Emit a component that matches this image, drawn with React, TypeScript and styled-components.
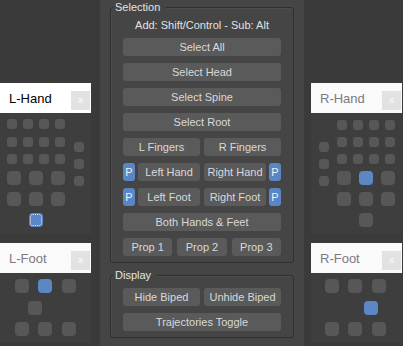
import React from "react";
import styled, { createGlobalStyle } from "styled-components";

const Global = createGlobalStyle`
  html, body { margin: 0; padding: 0; background: #3a3a3a; }
  body { font-family: "Liberation Sans", Arial, sans-serif; }
  #root { width: 403px; height: 346px; }
  * { box-sizing: border-box; }
`;

const Window = styled.div`
  display: flex;
  width: 403px;
  height: 346px;
  background: #3a3a3a;
  overflow: hidden;
`;

const SideColumn = styled.div<{ $right?: boolean }>`
  width: 91px;
  flex: none;
  display: flex;
  flex-direction: column;
  gap: 9px;
  padding-top: 83px;
  margin-left: ${(p) => (p.$right ? "7px" : "0")};
`;

const Panel = styled.div`
  display: flex;
  flex-direction: column;
`;

const PanelHeader = styled.div<{ $active?: boolean }>`
  height: 30px;
  display: flex;
  align-items: center;
  padding-left: 9px;
  background: ${(p) => (p.$active ? "#ffffff" : "#fafafa")};
`;

const PanelTitle = styled.span<{ $active?: boolean }>`
  font-size: 13px;
  color: ${(p) => (p.$active ? "#000000" : "#7c7884")};
`;

const CloseButton = styled.div`
  margin-left: auto;
  align-self: flex-end;
  margin-right: 1px;
  margin-bottom: 3px;
  width: 19px;
  height: 19px;
  background: #e2e2e2;
  color: #f7f7f7;
  font-size: 9px;
  font-weight: bold;
  display: flex;
  align-items: center;
  justify-content: center;
  line-height: 1;
`;

const PanelBody = styled.div<{ $h: number }>`
  position: relative;
  height: ${(p) => p.$h}px;
  background: #3e3e3e;
`;

const Node = styled.div<{ $x: number; $y: number; $s: number; $on?: boolean; $focus?: boolean }>`
  position: absolute;
  left: ${(p) => p.$x}px;
  top: ${(p) => p.$y}px;
  width: ${(p) => p.$s}px;
  height: ${(p) => p.$s}px;
  border-radius: ${(p) => (p.$s > 12 ? 4 : 3)}px;
  background: ${(p) => (p.$on ? "#5b87c5" : "#575757")};
  outline: ${(p) => (p.$focus ? "1px dotted #dde6f2" : "none")};
  outline-offset: -2px;
`;

const Center = styled.div`
  width: 204px;
  flex: none;
  margin-left: 9px;
  background: #454545;
  padding: 7px 10px 0;
  display: flex;
  flex-direction: column;
  gap: 12px;
`;

const Group = styled.div<{ $pt: number }>`
  position: relative;
  width: 184px;
  border: 1px solid #2f2f2f;
  border-radius: 3px;
  box-shadow: inset 1px 1px 0 #4d4d4d;
  padding: ${(p) => p.$pt}px 12px 6px;
  display: flex;
  flex-direction: column;
  gap: 7px;
`;

const Legend = styled.span`
  position: absolute;
  top: -8px;
  left: 2px;
  padding: 0 6px 0 2px;
  background: #454545;
  color: #e4e4e4;
  font-size: 11px;
  line-height: 14px;
`;

const Hint = styled.div`
  color: #e2e2e2;
  font-size: 11px;
  line-height: 13px;
  text-align: center;
  margin-bottom: -1px;
`;

const Row = styled.div<{ $gap: number; $grow?: boolean }>`
  display: flex;
  gap: ${(p) => p.$gap}px;
  flex: ${(p) => (p.$grow ? "1 1 0" : "none")};
`;

const Button = styled.div<{ $pin?: boolean; $grow?: boolean }>`
  height: 18px;
  flex: ${(p) => (p.$grow ? "1 1 0" : "none")};
  width: ${(p) => (p.$pin ? "12px" : "auto")};
  border-radius: 3px;
  background: ${(p) => (p.$pin ? "#5a86c4" : "#5a5a5a")};
  color: ${(p) => (p.$pin ? "#eef2f8" : "#d9d9d9")};
  font-size: 11px;
  display: flex;
  align-items: center;
  justify-content: center;
  white-space: nowrap;
`;

type N = [number, number, number, boolean?, boolean?];

const lHand: N[] = [
  [7, 6, 10], [23, 6, 10], [39, 6, 10], [55, 6, 10],
  [7, 24, 10], [23, 24, 10], [39, 24, 10], [55, 24, 10],
  [7, 41, 10], [23, 41, 10], [39, 41, 10], [55, 41, 10],
  [74, 29, 10], [74, 46, 10], [74, 63, 10],
  [7, 58, 14], [29, 58, 14], [51, 58, 14],
  [7, 79, 14], [29, 79, 14], [51, 79, 14],
  [29, 100, 14, true, true],
];

const rHand: N[] = [
  [26, 7, 10], [42, 7, 10], [58, 7, 10], [74, 7, 10],
  [26, 24, 10], [42, 24, 10], [58, 24, 10], [74, 24, 10],
  [26, 41, 10], [42, 41, 10], [58, 41, 10], [74, 41, 10],
  [8, 29, 10], [8, 46, 10], [8, 63, 10],
  [26, 58, 14], [48, 58, 14, true], [70, 58, 14],
  [26, 79, 14], [48, 79, 14], [70, 79, 14],
  [48, 100, 14],
];

const lFoot: N[] = [
  [15, 6, 14], [38, 6, 14, true], [62, 6, 14],
  [28, 28, 14],
  [15, 49, 14], [38, 49, 14], [62, 49, 14],
];

const rFoot: N[] = [
  [14, 6, 14], [37, 6, 14], [61, 6, 14],
  [53, 28, 14, true],
  [14, 49, 14], [37, 49, 14], [61, 49, 14],
];

const Picker: React.FC<{ title: string; active?: boolean; h: number; nodes: N[] }> = ({ title, active, h, nodes }) => (
  <Panel>
    <PanelHeader $active={active}>
      <PanelTitle $active={active}>{title}</PanelTitle>
      <CloseButton>x</CloseButton>
    </PanelHeader>
    <PanelBody $h={h}>
      {nodes.map(([x, y, s, on, focus], i) => (
        <Node key={i} $x={x} $y={y} $s={s} $on={on} $focus={focus} />
      ))}
    </PanelBody>
  </Panel>
);

export default function App() {
  return (
    <>
      <Global />
      <Window>
        <SideColumn>
          <Picker title="L-Hand" active h={121} nodes={lHand} />
          <Picker title="L-Foot" h={70} nodes={lFoot} />
        </SideColumn>
        <Center>
          <Group $pt={11}>
            <Legend>Selection</Legend>
            <Hint>Add: Shift/Control - Sub: Alt</Hint>
            <Button>Select All</Button>
            <Button>Select Head</Button>
            <Button>Select Spine</Button>
            <Button>Select Root</Button>
            <Row $gap={4}>
              <Button $grow>L Fingers</Button>
              <Button $grow>R Fingers</Button>
            </Row>
            <Row $gap={3}>
              <Button $pin>P</Button>
              <Row $gap={4} $grow>
                <Button $grow>Left Hand</Button>
                <Button $grow>Right Hand</Button>
              </Row>
              <Button $pin>P</Button>
            </Row>
            <Row $gap={3}>
              <Button $pin>P</Button>
              <Row $gap={4} $grow>
                <Button $grow>Left Foot</Button>
                <Button $grow>Right Foot</Button>
              </Row>
              <Button $pin>P</Button>
            </Row>
            <Button>Both Hands &amp; Feet</Button>
            <Row $gap={5}>
              <Button $grow>Prop 1</Button>
              <Button $grow>Prop 2</Button>
              <Button $grow>Prop 3</Button>
            </Row>
          </Group>
          <Group $pt={12}>
            <Legend>Display</Legend>
            <Row $gap={4}>
              <Button $grow>Hide Biped</Button>
              <Button $grow>Unhide Biped</Button>
            </Row>
            <Button>Trajectories Toggle</Button>
          </Group>
        </Center>
        <SideColumn $right>
          <Picker title="R-Hand" h={121} nodes={rHand} />
          <Picker title="R-Foot" h={70} nodes={rFoot} />
        </SideColumn>
      </Window>
    </>
  );
}
